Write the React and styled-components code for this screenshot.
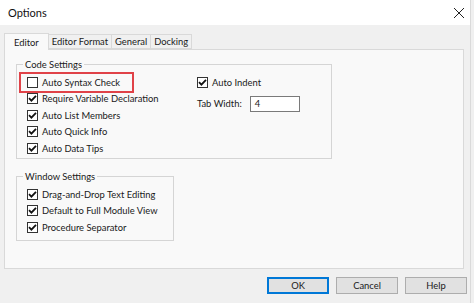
import React from "react";
import styled, { createGlobalStyle } from "styled-components";

const GlobalStyle = createGlobalStyle`
  *, *::before, *::after {
    box-sizing: border-box;
  }
  html, body {
    margin: 0;
    padding: 0;
    background: #f0f0f0;
  }
  body {
    font-family: Lato, "Noto Sans", sans-serif;
    font-size: 9.4px;
    color: #1a1a1a;
  }
`;

const Window = styled.div`
  width: 471px;
  height: 303px;
  background: #f0f0f0;
  border-right: 1px solid #dadada;
  display: flex;
  flex-direction: column;
`;

const TitleBar = styled.div`
  height: 25px;
  background: #fff;
  display: flex;
  align-items: center;
  justify-content: space-between;
  padding: 0 5px 0 8px;
`;

const Title = styled.span`
  font-size: 11px;
  color: #111;
`;

const CloseIcon = () => (
  <svg width="12" height="12" viewBox="0 0 12 12">
    <path d="M1 1 L11 11 M11 1 L1 11" stroke="#222" strokeWidth="1" fill="none" />
  </svg>
);

const Body = styled.div`
  flex: 1;
  display: flex;
  flex-direction: column;
  padding: 8px 6px 0 4px;
`;

const TabStrip = styled.div`
  display: flex;
  align-items: flex-end;
  height: 16px;
  position: relative;
  z-index: 1;
`;

const Tab = styled.div`
  height: ${(p) => (p.active ? "17px" : "15px")};
  padding: 0 ${(p) => (p.active ? "9px" : "3px")};
  margin-bottom: ${(p) => (p.active ? "-1px" : "0")};
  display: flex;
  align-items: center;
  background: ${(p) => (p.active ? "#f9f9f9" : "#f0f0f0")};
  border: 1px solid #d9d9d9;
  border-bottom: ${(p) => (p.active ? "none" : "1px solid #d9d9d9")};
  & + & {
    margin-left: -1px;
  }
`;

const Panel = styled.div`
  height: 220px;
  background: #f9f9f9;
  border: 1px solid #d9d9d9;
  padding: 9px 0 0 11px;
  display: flex;
  flex-direction: column;
  gap: 12px;
`;

const Group = styled.fieldset`
  margin: 0;
  width: ${(p) => p.width}px;
  height: ${(p) => p.height}px;
  border: 1px solid #d5d5d5;
  padding: 0 0 0 10px;
`;

const Legend = styled.legend`
  padding: 0 2px;
  margin-left: -4px;
  color: #1a1a1a;
  line-height: 11px;
`;

const GroupBody = styled.div`
  display: flex;
`;

const Column = styled.div`
  display: flex;
  flex-direction: column;
  width: ${(p) => (p.width ? `${p.width}px` : "auto")};
  padding-top: ${(p) => p.top || 0}px;
`;

const Row = styled.label`
  display: flex;
  align-items: center;
  gap: 4px;
  height: 16.5px;
  width: fit-content;
  ${(p) =>
    p.highlight &&
    `
    outline: 2px solid #e04248;
    padding: 0 12px 0 6px;
    margin-left: -6px;
  `}
`;

const Box = styled.span`
  width: 11px;
  height: 11px;
  border: 1px solid #333;
  background: #fff;
  display: flex;
  align-items: center;
  justify-content: center;
  flex-shrink: 0;
`;

const CheckMark = () => (
  <svg width="9" height="9" viewBox="0 0 9 9">
    <path d="M1 4.2 L3.4 6.6 L8 1.8" stroke="#111" strokeWidth="1.8" fill="none" />
  </svg>
);

const Check = ({ checked, label, highlight }) => (
  <Row highlight={highlight}>
    <Box>{checked && <CheckMark />}</Box>
    <span>{label}</span>
  </Row>
);

const FieldRow = styled.div`
  display: flex;
  align-items: center;
  gap: 8px;
  margin-top: 5px;
`;

const Input = styled.div`
  width: 50px;
  height: 16px;
  background: #fff;
  border: 1px solid #7a7a7a;
  padding-left: 4px;
  display: flex;
  align-items: center;
`;

const Footer = styled.div`
  display: flex;
  justify-content: flex-end;
  gap: 7px;
  padding-top: 8px;
  margin-right: -3px;
`;

const Button = styled.div`
  width: 62px;
  height: 17px;
  background: #e1e1e1;
  border: ${(p) => (p.primary ? "2px solid #0078d7" : "1px solid #adadad")};
  display: flex;
  align-items: center;
  justify-content: center;
`;

export default function App() {
  return (
    <>
      <GlobalStyle />
      <Window>
        <TitleBar>
          <Title>Options</Title>
          <CloseIcon />
        </TitleBar>
        <Body>
          <TabStrip>
            <Tab active>Editor</Tab>
            <Tab>Editor Format</Tab>
            <Tab>General</Tab>
            <Tab>Docking</Tab>
          </TabStrip>
          <Panel>
            <Group width={316} height={100}>
              <Legend>Code Settings</Legend>
              <GroupBody>
                <Column width={170} top={4}>
                  <Check highlight label="Auto Syntax Check" />
                  <Check checked label="Require Variable Declaration" />
                  <Check checked label="Auto List Members" />
                  <Check checked label="Auto Quick Info" />
                  <Check checked label="Auto Data Tips" />
                </Column>
                <Column top={4}>
                  <Check checked label="Auto Indent" />
                  <FieldRow>
                    <span>Tab Width:</span>
                    <Input>4</Input>
                  </FieldRow>
                </Column>
              </GroupBody>
            </Group>
            <Group width={158} height={70}>
              <Legend>Window Settings</Legend>
              <Column top={4}>
                <Check checked label="Drag-and-Drop Text Editing" />
                <Check checked label="Default to Full Module View" />
                <Check checked label="Procedure Separator" />
              </Column>
            </Group>
          </Panel>
          <Footer>
            <Button primary>OK</Button>
            <Button>Cancel</Button>
            <Button>Help</Button>
          </Footer>
        </Body>
      </Window>
    </>
  );
}
